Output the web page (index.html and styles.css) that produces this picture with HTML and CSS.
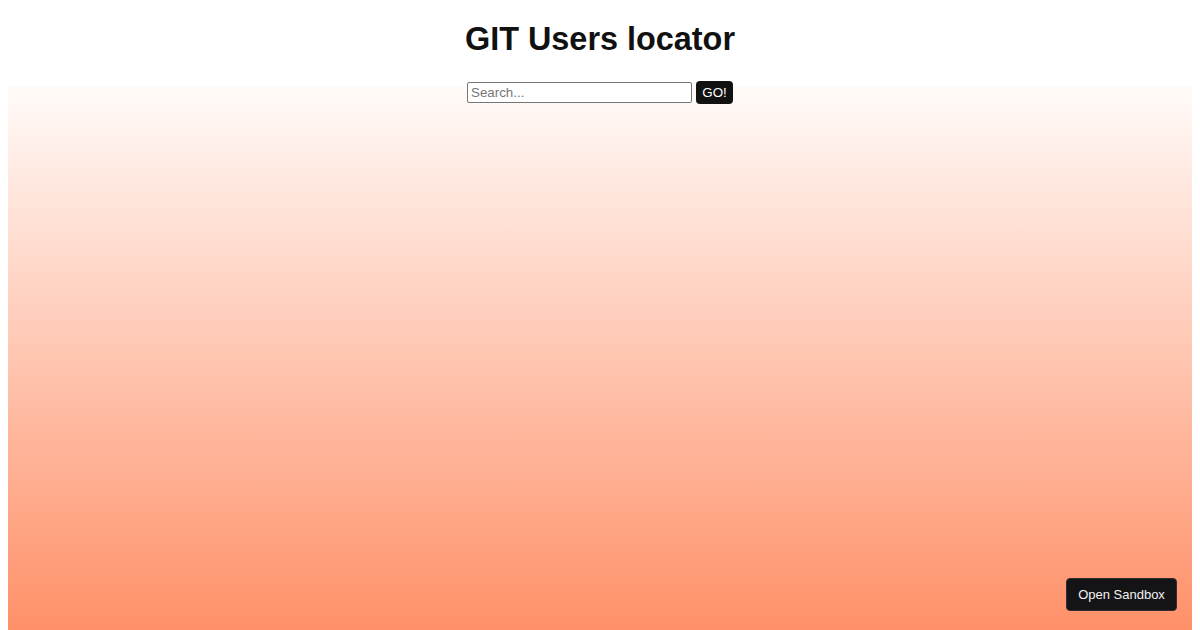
FILE: index.html
```html
<!DOCTYPE html>
<html lang="en">
<head>
<meta charset="utf-8">
<title>GIT Users locator</title>
<link rel="stylesheet" href="styles.css">
</head>
<body>
  <h1 class="title">GIT Users locator</h1>
  <main class="stage">
    <form class="search" onsubmit="return false;">
      <input class="search-input" type="text" placeholder="Search...">
      <button class="search-btn" type="submit">GO!</button>
    </form>
  </main>
  <button class="sandbox-btn" type="button">Open Sandbox</button>
</body>
</html>
```

FILE: styles.css
```css
html, body {
  background: #ffffff;
}
body {
  margin: 8px;
  font-family: "Liberation Sans", Arial, sans-serif;
  color: #111;
}
.title {
  margin: 13px 0 22px;
  font-size: 32.4px;
  font-weight: bold;
  text-align: center;
  line-height: 37px;
}
.stage {
  min-height: calc(100vh - 80px);
  background: linear-gradient(180deg, #ffffff 0, #ffffff 6px, #fffbf9 6px, #ff9068 100%);
}
.search {
  display: flex;
  justify-content: center;
  align-items: center;
  gap: 4px;
  padding-top: 1px;
}
.search-input {
  box-sizing: border-box;
  width: 225px;
  height: 21px;
  margin: 0;
  padding: 1px 3px;
  border: 1px solid #767676;
  border-radius: 2px;
  background: #fff;
  font-family: "Liberation Sans", Arial, sans-serif;
  font-size: 13.33px;
  color: #111;
}
.search-input::placeholder {
  color: #757575;
}
.search-btn {
  box-sizing: border-box;
  width: 37px;
  height: 23px;
  margin: 0;
  padding: 0;
  border: none;
  border-radius: 4px;
  background: #111111;
  color: #fff;
  font-family: "Liberation Sans", Arial, sans-serif;
  font-size: 13.33px;
}
.sandbox-btn {
  position: fixed;
  right: 23px;
  bottom: 19px;
  box-sizing: border-box;
  width: 111px;
  height: 33px;
  padding: 0;
  border: 1px solid #2e2e33;
  border-radius: 4px;
  background: #141416;
  color: #f2f2f2;
  font-family: "Liberation Sans", Arial, sans-serif;
  font-size: 13px;
}
```
